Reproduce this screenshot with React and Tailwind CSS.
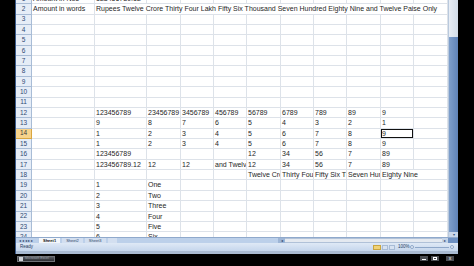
import React from 'react';

const COLS = ['w-[63px]', 'w-[52px]', 'w-[34px]', 'w-[33px]', 'w-[33px]', 'w-[34px]', 'w-[33px]', 'w-[33px]', 'w-[34px]', 'w-[33px]', 'w-[34px]'];
const WIDTHS = [63, 52, 34, 33, 33, 34, 33, 33, 34, 33, 34];

const E = '';
// each row: 11 cells (A..K)
const rows = [
  ['Amount in Nos', '123456789.12', E, E, E, E, E, E, E, E, E],
  ['Amount in words', 'Rupees Twelve Crore Thirty Four Lakh Fifty Six Thousand Seven Hundred Eighty Nine and Twelve Paise Only', E, E, E, E, E, E, E, E, E],
  [E, E, E, E, E, E, E, E, E, E, E],
  [E, E, E, E, E, E, E, E, E, E, E],
  [E, E, E, E, E, E, E, E, E, E, E],
  [E, E, E, E, E, E, E, E, E, E, E],
  [E, E, E, E, E, E, E, E, E, E, E],
  [E, E, E, E, E, E, E, E, E, E, E],
  [E, E, E, E, E, E, E, E, E, E, E],
  [E, E, E, E, E, E, E, E, E, E, E],
  [E, E, E, E, E, E, E, E, E, E, E],
  [E, '123456789', '23456789', '3456789', '456789', '56789', '6789', '789', '89', '9', E],
  [E, '9', '8', '7', '6', '5', '4', '3', '2', '1', E],
  [E, '1', '2', '3', '4', '5', '6', '7', '8', '9', E],
  [E, '1', '2', '3', '4', '5', '6', '7', '8', '9', E],
  [E, '123456789', E, E, E, '12', '34', '56', '7', '89', E],
  [E, '123456789.12', '12', '12', 'and Twelve Paise Only', '12', '34', '56', '7', '89', E],
  [E, E, E, E, E, 'Twelve Crore', 'Thirty Four Lakh', 'Fifty Six Thousand', 'Seven Hundred', 'Eighty Nine', E],
  [E, '1', 'One', E, E, E, E, E, E, E, E],
  [E, '2', 'Two', E, E, E, E, E, E, E, E],
  [E, '3', 'Three', E, E, E, E, E, E, E, E],
  [E, '4', 'Four', E, E, E, E, E, E, E, E],
  [E, '5', 'Five', E, E, E, E, E, E, E, E],
  [E, '6', 'Six', E, E, E, E, E, E, E, E],
];

// cells whose text runs on into the empty cells to their right
const spans = { '1-1': 10, '17-9': 2 };

const font = { fontFamily: '"Liberation Sans", Arial, sans-serif' };

const Row = ({ cells, index }) => {
  const num = index + 1;
  const active = num === 14;
  const out = [];
  for (let c = 0; c < cells.length; c++) {
    const span = spans[`${index}-${c}`] || 1;
    let width = 0;
    for (let k = c; k < c + span; k++) width += WIDTHS[k];
    const isActive = active && c === 9;
    out.push(
      <div
        key={c}
        style={span > 1 ? { width } : undefined}
        className={`${span > 1 ? '' : COLS[c]} relative shrink-0 h-full border-r border-b border-[#dde2e9] overflow-hidden whitespace-nowrap pl-[1px] text-[7px] leading-[10px] text-[#262626]`}
      >
        {cells[c]}
        {isActive && <div className="absolute -left-[1px] -top-[1px] w-[34px] h-[11.36px] border-2 border-[#111]" />}
      </div>
    );
    c += span - 1;
  }
  return (
    <div className="flex h-[10.36px]">
      <div
        className={`w-[16px] shrink-0 h-full flex items-center justify-center border-r border-b text-[6.5px] ${
          active ? 'bg-[#f8d48c] border-[#d9a640] text-[#3b3b3b]' : 'bg-[#e6edf7] border-[#a8bcd6] text-[#2e4a74]'
        }`}
      >
        {num}
      </div>
      {out}
    </div>
  );
};

export default function App() {
  return (
    <div className="w-[474px] h-[266px] bg-black overflow-hidden flex flex-col" style={font}>
      <div className="flex h-[254px] shrink-0">
        <div className="w-[15px] shrink-0 bg-black" />
        <div className="w-[443px] shrink-0 flex flex-col bg-[#c5d6ec] border-l border-[#3a5a8a]">
          {/* sheet + vertical scrollbar */}
          <div className="flex h-[237px] shrink-0">
            <div className="w-[432px] shrink-0 bg-white overflow-hidden">
              <div className="-mt-[6.06px]">
                {rows.map((r, i) => (
                  <Row key={i} cells={r} index={i} />
                ))}
              </div>
            </div>
            <div className="w-[10px] shrink-0 flex flex-col bg-[#dfe7f1] border-l border-[#b9c9dd]">
              <div className="h-[37px] shrink-0 bg-gradient-to-r from-[#e9eef5] to-[#d3dde9]" />
              <div className="flex-1 bg-gradient-to-r from-[#7f9fcb] to-[#5f83b8]" />
              <div className="h-[5px] shrink-0 bg-[#c9d7ea] flex items-center justify-center text-[4px] text-[#33507a]">▾</div>
            </div>
          </div>
          {/* sheet tabs + horizontal scrollbar */}
          <div className="flex h-[6px] shrink-0 bg-[#bcd0ea] border-t border-[#8fa9cc]">
            <div className="w-[262px] shrink-0 flex items-end text-[4px] leading-[5px] text-[#2c4468]">
              <div className="w-[23px] pl-[3px] tracking-[1px]">◂◂◂▸▸</div>
              <div className="px-[4px] bg-[#f4f7fb] font-bold text-[#111]">Sheet1</div>
              <div className="px-[4px] ml-[2px] bg-[#d3dff0]">Sheet2</div>
              <div className="px-[4px] ml-[2px] bg-[#d3dff0]">Sheet3</div>
              <div className="w-[9px] ml-[2px] h-[5px] bg-[#d3dff0]" />
            </div>
            <div className="w-[7px] shrink-0 bg-[#9db5d6] flex items-center justify-center text-[4px] text-[#2c4468]">◂</div>
            <div className="flex-1 bg-[#e4e9f0] border-y border-[#b0c1d8]" />
            <div className="w-[6px] shrink-0 bg-[#c3d2e6] flex items-center justify-center text-[4px] text-[#2c4468]">▸</div>
            <div className="w-[10px] shrink-0 bg-[#6d90c2]" />
          </div>
          {/* status bar */}
          <div className="flex items-center h-[8px] shrink-0 bg-gradient-to-b from-[#dfe9f6] to-[#c5d6ec] text-[4.5px] text-[#223a5e]">
            <div className="pl-[4px] flex-1">Ready</div>
            <div className="w-[8px] h-[5px] bg-[#f0d277] border border-[#c9a540]" />
            <div className="w-[6px] h-[5px] ml-[1px] bg-[#d7e2f1] border border-[#a8bcd6]" />
            <div className="w-[6px] h-[5px] ml-[1px] bg-[#d7e2f1] border border-[#a8bcd6]" />
            <div className="ml-[3px] w-[10px]">100%</div>
            <div className="ml-[2px] w-[4px] h-[4px] rounded-full bg-[#e8eef7] border border-[#8ea7c9]" />
            <div className="w-[34px] h-[1px] mx-[1px] bg-[#8ea7c9]" />
            <div className="mr-[4px] w-[4px] h-[4px] rounded-full bg-[#e8eef7] border border-[#8ea7c9]" />
          </div>
          <div className="flex-1 bg-[#a9bbd2]" />
        </div>
        <div className="flex-1 bg-black" />
      </div>
      {/* taskbar */}
      <div className="flex items-start h-[12px] shrink-0 bg-black pt-[2px]">
        <div className="ml-[17px] w-[38px] h-[6px] bg-gradient-to-b from-[#5a5d63] to-[#2c2e33] border border-[#6e7176] flex items-center pl-[1px]">
          <div className="w-[4px] h-[4px] bg-[#cfd3d8]" />
          <div className="ml-[2px] text-[3.5px] text-[#9aa0a8] whitespace-nowrap">Microsoft Excel</div>
        </div>
        <div className="ml-auto mr-[20px] flex gap-[3px] items-center">
          <div className="w-[8px] h-[5px] bg-[#4a4d52] flex items-end justify-center pb-[1px]"><div className="w-[4px] h-[1px] bg-white" /></div>
          <div className="w-[8px] h-[5px] bg-[#4a4d52] flex items-center justify-center"><div className="w-[4px] h-[3px] border border-white" /></div>
          <div className="w-[8px] ml-[4px] h-[5px] bg-[#4a4d52] flex items-center justify-center text-[5px] leading-[5px] text-white">x</div>
        </div>
      </div>
    </div>
  );
}
